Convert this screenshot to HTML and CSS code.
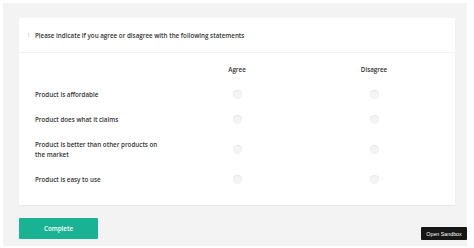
FILE: index.html
```html
<!DOCTYPE html>
<html>
<head>
<meta charset="utf-8">
<link rel="stylesheet" href="styles.css">
</head>
<body>
<div class="page">
  <div class="card">
    <div class="card-header">
      <span class="num">1.</span>
      <span class="title">Please indicate if you agree or disagree with the following statements</span>
    </div>
    <div class="matrix">
      <div class="cell label"></div>
      <div class="cell head">Agree</div>
      <div class="cell head">Disagree</div>

      <div class="cell label">Product is affordable</div>
      <div class="cell"><span class="radio"></span></div>
      <div class="cell"><span class="radio"></span></div>

      <div class="cell label">Product does what it claims</div>
      <div class="cell"><span class="radio"></span></div>
      <div class="cell"><span class="radio"></span></div>

      <div class="cell label">Product is better than other products on the market</div>
      <div class="cell"><span class="radio"></span></div>
      <div class="cell"><span class="radio"></span></div>

      <div class="cell label">Product is easy to use</div>
      <div class="cell"><span class="radio"></span></div>
      <div class="cell"><span class="radio"></span></div>
    </div>
  </div>
  <div class="footer">
    <button class="complete">Complete</button>
  </div>
  <a class="sandbox">Open Sandbox</a>
</div>
</body>
</html>
```

FILE: styles.css
```css
html, body {
  margin: 0;
  padding: 0;
  background: #ffffff;
}
body {
  font-family: "Open Sans", "Liberation Sans", sans-serif;
  color: #333333;
}
.page {
  position: relative;
  margin: 3px 7px 0 3px;
  height: 243px;
  background: #f3f3f3;
  padding: 15px 0 0 16px;
  box-sizing: border-box;
}
.card {
  width: 436px;
  background: #ffffff;
  box-shadow: 0 1px 1px rgba(0,0,0,0.04);
}
.card-header {
  height: 35px;
  display: flex;
  align-items: center;
  padding-left: 8px;
  border-bottom: 1px solid #f2f2f2;
  box-sizing: border-box;
}
.num {
  font-size: 5px;
  color: #b5b5b5;
  width: 8px;
}
.title {
  font-size: 6.25px;
  font-weight: 600;
  color: #333333;
}
.matrix {
  display: grid;
  grid-template-columns: 133.5px 137px 137px;
  padding: 4px 0 13px 16px;
}
.cell {
  display: flex;
  align-items: center;
  justify-content: center;
  padding: 7.5px 0;
  font-size: 6.25px;
  line-height: 10px;
  font-weight: 600;
  box-sizing: border-box;
}
.cell.label {
  justify-content: flex-start;
  padding-right: 6px;
}
.radio {
  width: 9px;
  height: 9px;
  border-radius: 50%;
  background: #f4f4f4;
  box-shadow: inset 0 0.5px 1px rgba(0,0,0,0.10);
}
.footer {
  display: flex;
  padding-top: 13px;
}
.complete {
  width: 79px;
  height: 21px;
  border: none;
  border-radius: 1px;
  background: #19b394;
  color: #ffffff;
  font-family: "Open Sans", "Liberation Sans", sans-serif;
  font-size: 6.25px;
  font-weight: 600;
  padding: 0;
}
.sandbox {
  position: absolute;
  right: 0;
  bottom: 6px;
  width: 46px;
  height: 13px;
  background: #161616;
  color: #ffffff;
  border-radius: 1px;
  font-family: "Liberation Sans", sans-serif;
  font-size: 5.3px;
  display: flex;
  align-items: center;
  justify-content: center;
}
```
